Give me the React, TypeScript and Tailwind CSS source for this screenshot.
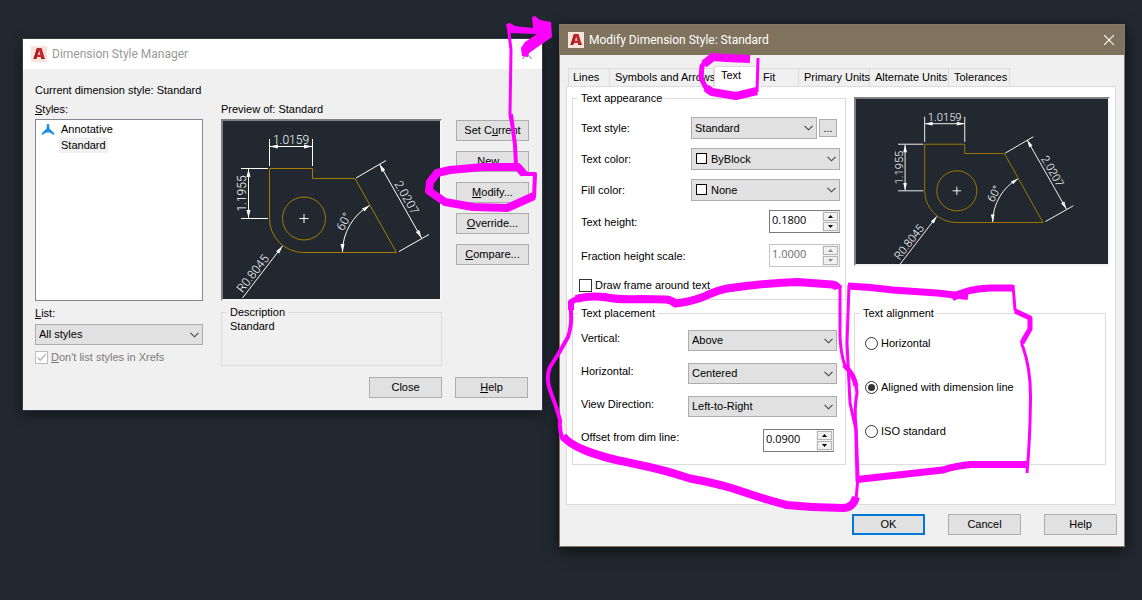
import React, { useId } from 'react';

type Box = { className?: string };

function AppLogo() {
  return (
    <svg viewBox="0 0 16 16" className="size-4 shrink-0" aria-hidden="true">
      <rect width="16" height="16" fill="#f9e3dc" />
      <path d="M6 2h4.500l3.500 11h-3.500l-.6-2H6.300l-1 2H2.500z" fill="#c1272d" />
      <path d="M8.200 5 7 8.700h2.400z" fill="#f9e3dc" />
      <path d="M2.500 13 6 2h1.200L4.600 13z" fill="#9b1c20" />
      <path d="m9.900 11 4.100 2h-3.500z" fill="#8f1a1e" />
    </svg>
  );
}

function CloseIcon() {
  return (
    <svg viewBox="0 0 10 10" className="size-[10px]" stroke="currentColor" strokeWidth="1.1" aria-hidden="true">
      <path d="M0 0 10 10M10 0 0 10" />
    </svg>
  );
}

function Button({
  children,
  primary,
  className = 'w-[73px] h-[21px]',
}: {
  children: React.ReactNode;
  primary?: boolean;
  className?: string;
}) {
  const edge = primary ? 'border-2 border-[#0078d7]' : 'border border-[#adadad]';
  return (
    <button type="button" className={`${className} ${edge} flex shrink-0 items-center justify-center bg-[#e1e1e1]`}>
      <span>{children}</span>
    </button>
  );
}

function Select({
  id,
  value,
  swatch,
  className = '',
}: {
  id: string;
  value: string;
  swatch?: boolean;
  className?: string;
}) {
  return (
    <div className={`relative ${className}`}>
      <select
        id={id}
        defaultValue={value}
        className={`h-full w-full appearance-none border border-[#adadad] bg-[#e1e1e1] ${swatch ? 'pl-[19px]' : 'pl-[3px]'}`}
      >
        <option>{value}</option>
      </select>
      {swatch && (
        <span className="pointer-events-none absolute top-[5px] left-[5px] size-[11px] border border-black bg-white" />
      )}
      <svg
        viewBox="0 0 9 6"
        className="pointer-events-none absolute top-2 right-1 h-[6px] w-[9px]"
        fill="none"
        stroke="#444"
        strokeWidth="1.1"
        aria-hidden="true"
      >
        <path d="M.5.8 4.5 4.8 8.5.8" />
      </svg>
    </div>
  );
}

function Spinner({ id, value, disabled }: { id: string; value: string; disabled?: boolean }) {
  const tone = disabled ? 'border-[#c4c4c4]' : 'border-[#7a7a7a] border-r-[#adadad]';
  const fill = disabled ? '#8a8a8a' : '#000';
  return (
    <div className={`flex h-[23px] w-[71px] shrink-0 border bg-white ${tone}`}>
      <input
        id={id}
        defaultValue={value}
        disabled={disabled}
        className="w-0 flex-1 bg-white pb-[3px] pl-[2px] font-['Open_Sans',sans-serif] text-[11px] disabled:text-[#6d6d6d]"
      />
      <div className="flex w-[17px] flex-col gap-px bg-[#f0f0f0] p-px">
        {['M0 3 2.5 0 5 3z', 'M0 0 2.5 3 5 0z'].map((d, i) => (
          <button
            key={d}
            type="button"
            disabled={disabled}
            aria-label={i === 0 ? 'Increase' : 'Decrease'}
            className="flex flex-1 items-center justify-center border border-[#b5b5b5] bg-[#f0f0f0]"
          >
            <svg viewBox="0 0 5 3" className="h-[3px] w-[5px]" fill={fill} aria-hidden="true">
              <path d={d} />
            </svg>
          </button>
        ))}
      </div>
    </div>
  );
}

function Check({ label, checked, disabled }: { label: React.ReactNode; checked?: boolean; disabled?: boolean }) {
  const id = useId();
  return (
    <div className="flex items-center gap-[3px]">
      <span className="relative size-[13px]">
        <input
          id={id}
          type="checkbox"
          defaultChecked={checked}
          disabled={disabled}
          className="block size-[13px] appearance-none border border-[#333] bg-white disabled:border-[#bcbcbc]"
        />
        {checked && (
          <svg
            viewBox="0 0 13 13"
            className="pointer-events-none absolute inset-0"
            fill="none"
            stroke="#b5b5b5"
            strokeWidth="1.4"
            aria-hidden="true"
          >
            <path d="m2.5 6.5 2.8 2.8 5.2-6" />
          </svg>
        )}
      </span>
      <label htmlFor={id} className={`leading-[14px] ${disabled ? 'text-[#7a7a7a]' : ''}`}>
        {label}
      </label>
    </div>
  );
}

function Radio({ label, checked }: { label: string; checked?: boolean }) {
  const id = useId();
  return (
    <div className="flex items-center gap-[3px]">
      <span className="relative size-[13px]">
        <input
          id={id}
          type="radio"
          name="alignment"
          defaultChecked={checked}
          className="peer block size-[13px] appearance-none rounded-full border border-[#333] bg-white"
        />
        <span className="pointer-events-none absolute inset-[3px] hidden rounded-full bg-[#333] peer-checked:block" />
      </span>
      <label htmlFor={id} className="leading-[14px]">
        {label}
      </label>
    </div>
  );
}

function Group({ title, children, className = '' }: { title: string; children: React.ReactNode; className?: string }) {
  return (
    <fieldset className={`min-w-0 border border-[#dcdcdc] ${className}`}>
      <legend className="ml-[5px] px-[3px] leading-[14px]">{title}</legend>
      {children}
    </fieldset>
  );
}

function Drawing({ viewBox, className = '' }: { viewBox: string } & Box) {
  return (
    <div className={`border-2 border-t-[#808080] border-r-[#f5f5f5] border-b-[#f5f5f5] border-l-[#808080] bg-[#212830] ${className}`}>
      <svg viewBox={viewBox} className="block h-full w-full" role="img" aria-label="Dimension preview">
        <g fill="none" stroke="#a87b00" strokeWidth="1">
          <path d="M269.5 168.5h43v10h42.500l41.500 74h-93a34 34 0 0 1-34-34z" />
          <circle cx="304" cy="218.500" r="21.500" />
        </g>
        <g fill="none" stroke="#fff" strokeWidth="1">
          <path d="M269.500 139v27M312.500 139v27M270 146.500h42" />
          <path d="M241 168.500h27M241 218.500h27M248.500 169v49" />
          <path d="M299.500 218.500h9M304 214v9" />
          <path d="M342.500 252a54 54 0 0 1 27-46.500" />
          <path d="m356 178 30-17.500M399 251.500l30-17M379.500 164l42 74" />
          <path d="m282.500 246-40 52" />
        </g>
        <g fill="#fff">
          <path d="m270 146.500 8-2v4zM312 146.500l-8-2v4zM248.500 169l-2 8h4zM248.500 218l-2-8h4z" />
          <path d="m342.500 252-2-8h4zM369.500 205.500l-7.500 3 2.500 3zM379.500 164l2.200 8 3.500-2zM421.500 238l-5.700-6 3.500-2zM282.500 246l-6.300 5.200 3.100 2.400z" />
        </g>
        <g fill="#fff" textAnchor="middle" className="font-[Roboto,sans-serif] text-[12px] font-light">
          <text x="291" y="143.500">1.0159</text>
          <text transform="translate(246 193.500) rotate(-90)">1.1955</text>
          <text transform="translate(347.500 223.500) rotate(-62)">60°</text>
          <text transform="translate(403 199.500) rotate(60)">2.0207</text>
          <text transform="translate(256 276) rotate(-52)">R0.8045</text>
        </g>
      </svg>
    </div>
  );
}

function TitleBar({ title, className }: { title: string; className: string }) {
  return (
    <header className={`flex items-center pr-[10px] pl-2 ${className}`}>
      <AppLogo />
      <h1 className="ml-[5px] flex-1 font-[Roboto,sans-serif] text-[12px]">{title}</h1>
      <button type="button" aria-label="Close window" className="flex items-center">
        <CloseIcon />
      </button>
    </header>
  );
}

function StyleManager() {
  return (
    <section className="absolute top-[39px] left-[23px] w-[519px] bg-[#f0f0f0] shadow-[0_0_0_1px_#343a41,0_4px_12px_rgba(0,0,0,0.5)]">
      <TitleBar title="Dimension Style Manager" className="h-[30px] bg-white text-[#999]" />
      <div className="px-3 pt-[14px] pb-3">
        <p className="leading-[14px]">Current dimension style: Standard</p>
        <div className="mt-[5px] flex">
          <div className="w-[168px]">
            <p className="leading-[14px]">
              <u>S</u>tyles:
            </p>
            <ul className="mt-[3px] h-[182px] border border-[#828790] bg-white pt-[1px] pl-[6px] leading-4">
              <li className="flex items-center">
                <svg viewBox="0 0 12 11" className="h-[11px] w-3" fill="#1e8fe1" aria-hidden="true">
                  <path d="M5 0h2l.5 4.500L12 9v2L7.500 8.500h-3L0 11V9l4.500-4.500z" />
                </svg>
                <span className="ml-[5px] px-[2px]">Annotative</span>
              </li>
              <li className="flex pl-[17px]">
                <span className="bg-[#f0f0f0] px-[2px]">Standard</span>
              </li>
            </ul>
            <label htmlFor="list" className="mt-[5px] block leading-[14px]">
              <u>L</u>ist:
            </label>
            <Select id="list" value="All styles" className="mt-1 mb-[5px] h-[21px]" />
            <Check
              label={
                <>
                  <u>D</u>on't list styles in Xrefs
                </>
              }
              checked
              disabled
            />
          </div>
          <div className="ml-[18px] flex-1">
            <p className="leading-[14px]">Preview of: Standard</p>
            <Drawing viewBox="223 121 217 178" className="mt-[3px] h-[182px]" />
            <Group title="Description" className="mt-1 h-[61px]">
              <p className="px-2 leading-[14px]">Standard</p>
            </Group>
          </div>
          <div className="mt-[18px] mr-[1px] ml-[14px] flex flex-col gap-[10px]">
            <Button>
              Set C<u>u</u>rrent
            </Button>
            <Button>
              <u>N</u>ew...
            </Button>
            <Button>
              <u>M</u>odify...
            </Button>
            <Button>
              <u>O</u>verride...
            </Button>
            <Button>
              <u>C</u>ompare...
            </Button>
          </div>
        </div>
        <footer className="mt-[11px] mr-[2px] flex justify-end gap-[13px]">
          <Button>Close</Button>
          <Button>
            <u>H</u>elp
          </Button>
        </footer>
      </div>
    </section>
  );
}

const TABS = [
  { name: 'Lines', width: 'w-[42px]' },
  { name: 'Symbols and Arrows', width: 'w-[104px]' },
  { name: 'Text', width: 'w-[44px]' },
  { name: 'Fit', width: 'w-[41px]' },
  { name: 'Primary Units', width: 'w-[71px]' },
  { name: 'Alternate Units', width: 'w-[79px]' },
  { name: 'Tolerances', width: 'w-[61px]' },
];

function Row({
  id,
  label,
  children,
  top,
}: {
  id: string;
  label: string;
  children: React.ReactNode;
  top?: boolean;
}) {
  return (
    <div className={`flex justify-between ${top ? 'items-start' : 'items-center'}`}>
      <label htmlFor={id} className="leading-4">
        {label}
      </label>
      {children}
    </div>
  );
}

function ModifyStyle() {
  return (
    <section className="absolute top-[24px] left-[559px] w-[566px] border border-[#857961] bg-[#f0f0f0] shadow-[0_4px_14px_rgba(0,0,0,0.6)]">
      <TitleBar title="Modify Dimension Style: Standard" className="h-[30px] bg-[#7f735d] text-white" />
      <div className="pt-[11px] pr-[7px] pb-[11px] pl-[6px]">
        <div role="tablist" className="flex items-end pl-[2px]">
          {TABS.map((tab) =>
            tab.name === 'Text' ? (
              <button
                key={tab.name}
                type="button"
                role="tab"
                aria-selected="true"
                className={`${tab.width} relative -mb-px h-[21px] border border-b-0 border-[#dcdcdc] bg-white pb-1 pl-[6px] text-left`}
              >
                {tab.name}
              </button>
            ) : (
              <button
                key={tab.name}
                type="button"
                role="tab"
                aria-selected="false"
                className={`${tab.width} h-[18px] border-t border-r border-[#dcdcdc] pl-[5px] text-left whitespace-nowrap first:border-l first:pl-1`}
              >
                {tab.name}
              </button>
            ),
          )}
        </div>
        <div className="mr-[1px] flex border border-[#dcdcdc] bg-white px-[5px] pt-1 pb-[39px]">
          <div className="w-[274px]">
            <Group title="Text appearance" className="h-[209px]">
              <div className="pr-[5px] pl-2">
                <div className="flex flex-col gap-[9px] pt-3">
                  <Row id="style" label="Text style:">
                    <div className="mr-[3px] flex items-center gap-[2px]">
                      <Select id="style" value="Standard" className="h-[22px] w-[126px]" />
                      <Button className="h-[18px] w-[18px]">...</Button>
                    </div>
                  </Row>
                  <Row id="color" label="Text color:">
                    <Select id="color" value="ByBlock" swatch className="h-[22px] w-[149px]" />
                  </Row>
                  <Row id="fill" label="Fill color:">
                    <Select id="fill" value="None" swatch className="h-[22px] w-[149px]" />
                  </Row>
                  <Row id="height" label="Text height:">
                    <Spinner id="height" value="0.1800" />
                  </Row>
                </div>
                <div className="mt-[11px]">
                  <Row id="fraction" label="Fraction height scale:">
                    <Spinner id="fraction" value="1.0000" disabled />
                  </Row>
                </div>
                <div className="mt-[11px] -ml-[2px]">
                  <Check label="Draw frame around text" />
                </div>
              </div>
            </Group>
            <Group title="Text placement" className="mt-[6px] h-[159px]">
              <div className="flex flex-col gap-3 px-2 pt-[10px]">
                <Row id="vertical" label="Vertical:" top>
                  <Select id="vertical" value="Above" className="h-[21px] w-[149px]" />
                </Row>
                <Row id="horizontal" label="Horizontal:" top>
                  <Select id="horizontal" value="Centered" className="h-[21px] w-[149px]" />
                </Row>
                <Row id="direction" label="View Direction:" top>
                  <Select id="direction" value="Left-to-Right" className="h-[21px] w-[149px]" />
                </Row>
                <div className="pr-[3px]">
                  <Row id="offset" label="Offset from dim line:" top>
                    <Spinner id="offset" value="0.0900" />
                  </Row>
                </div>
              </div>
            </Group>
          </div>
          <div className="ml-2 flex-1">
            <Drawing viewBox="196 120 270 177" className="mt-[6px] h-[169px]" />
            <Group title="Text alignment" className="mt-10 mr-1 h-[159px]">
              <div className="flex flex-col gap-[30px] pt-4 pl-[10px]">
                <Radio label="Horizontal" />
                <Radio label="Aligned with dimension line" checked />
                <Radio label="ISO standard" />
              </div>
            </Group>
          </div>
        </div>
        <footer className="mt-[9px] flex justify-end gap-[23px]">
          <Button primary>OK</Button>
          <Button>Cancel</Button>
          <Button>Help</Button>
        </footer>
      </div>
    </section>
  );
}

function MarkerNotes() {
  return (
    <svg
      viewBox="0 0 1142 600"
      className="pointer-events-none absolute top-0 left-0 h-[600px] w-[1142px]"
      fill="none"
      stroke="#ff00ff"
      strokeLinejoin="round"
      aria-hidden="true"
    >
      <path
        fill="#ff00ff"
        stroke="none"
        d="m506 24 4-1 5 3 18 2-1-11 3-1 5 4 11 2 1 15-23 16-1 4-6-1-1-8 4-6 12-8-28-1z"
      />
      <path strokeWidth="3" d="m508 25 3 25-1 65 2 10" />
      <path strokeWidth="4" d="m511 114 4 31 1 20" />
      <path strokeWidth="8" d="m524 174-6-7-35 0-33 3-13 3-7 9-1 9 16 11 28 5 34 1 27-12" />
      <path strokeWidth="4" d="m521 174 14 0-1 24" />
      <path strokeWidth="8" d="m750 59-24-1-13-1-9 7" />
      <path strokeWidth="5" d="m706 61-4 5-1 12 5 10 4 5" />
      <path strokeWidth="8" d="m706 88 6 4 24 4 21-5" />
      <path strokeWidth="3" d="m757 92 1-34" />
      <path strokeWidth="6" d="M571 310V302l9-5 27-1" />
      <path
        strokeWidth="8"
        d="M576 299Q590 295 607 297.500Q620 300 640 299L666 299.500Q672 300 675 303.500Q690 302 703 297Q718 290 727 288.500Q765 283 797 282L832 284.500Q837 285 838 289"
      />
      <path strokeWidth="3" d="M840 285V337Q841 355 845 366Q856 374 857 393Q854 410 856 427L858 477L856 500" />
      <path strokeWidth="5" d="M844 365Q854 374 856 386" />
      <path
        strokeWidth="8"
        d="M856 497Q853 508 843 508Q815 508 787 505Q770 501 733 488.500Q715 483 690 478.500Q665 470 633 463.500Q600 457 583 449.500Q568 443 563 436"
      />
      <path strokeWidth="4" d="M563 440Q559 430 560 420Q556 405 551 393Q545 378 550 367Q560 352 568 337Q572 325 571 313V303" />
      <path strokeWidth="7" d="M848 286Q870 287 893 290L937 293L968 296.500" />
      <path strokeWidth="7" d="M952 298Q965 289 990 288H1013" />
      <path strokeWidth="3" d="M1013 285L1015 310L1030 318V329Q1019 342 1023 347Q1031 370 1030.500 400Q1030 440 1027 473" />
      <path strokeWidth="5" d="M1015 311L1030 318V329L1022 343" />
      <path strokeWidth="7" d="M1027 464.500H970Q955 466 943 470L857 479.500" />
      <path strokeWidth="3" d="M849 285L847 343L850 403L856 430L857 482" />
    </svg>
  );
}

export default function App() {
  return (
    <main className="relative min-h-screen w-full overflow-hidden bg-[#212830] font-['Liberation_Sans',Arial,sans-serif] text-[11px] text-black">
      <StyleManager />
      <ModifyStyle />
      <MarkerNotes />
    </main>
  );
}
